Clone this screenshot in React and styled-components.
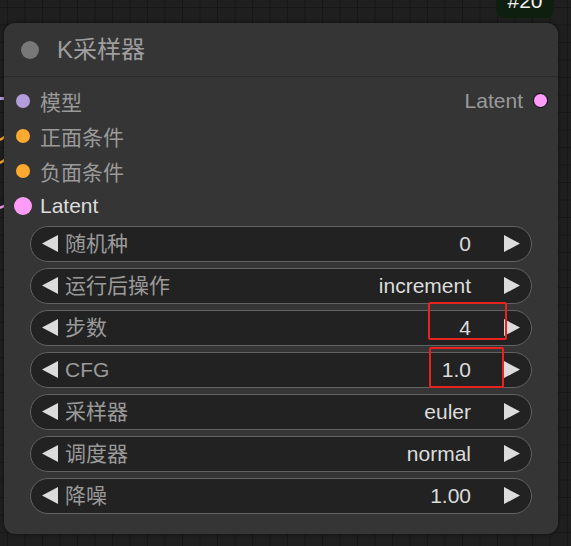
import React from "react";
import styled, { createGlobalStyle } from "styled-components";

const Global = createGlobalStyle`
  html, body { margin: 0; padding: 0; }
  body {
    width: 571px;
    height: 546px;
    overflow: hidden;
    background-color: #1f1f1f;
    background-image:
      linear-gradient(to right, #171717 1px, transparent 1px),
      linear-gradient(to bottom, #171717 1px, transparent 1px);
    background-size: 17.5px 17.5px;
    background-position: 7px 7px;
    font-family: "Liberation Sans", Arial, "Noto Sans CJK SC", sans-serif;
  }
`;

const Canvas = styled.div`
  position: relative;
  width: 571px;
  height: 546px;
`;

const Wires = styled.svg`
  position: absolute;
  left: 0;
  top: 0;
`;

const Badge = styled.div`
  position: absolute;
  left: 496px;
  top: -11px;
  width: 58px;
  height: 29px;
  background: #0f1f0f;
  border-radius: 0 0 8px 8px;
  color: #f2f2f2;
  font-size: 21px;
  line-height: 21px;
  text-align: center;
  padding-top: 1px;
  box-sizing: border-box;
`;

const Node = styled.div`
  position: absolute;
  left: 4px;
  top: 23px;
  width: 554px;
  height: 511px;
  background: #353535;
  border-radius: 11px;
  box-shadow: 0 0 4px rgba(0, 0, 0, 0.55);
  display: flex;
  flex-direction: column;
  box-sizing: border-box;
`;

const TitleBar = styled.div`
  height: 53px;
  border-bottom: 1px solid #2a2a2a;
  display: flex;
  align-items: center;
  padding-left: 17px;
  gap: 18px;
  box-sizing: content-box;
`;

const TitleDot = styled.span`
  width: 18px;
  height: 18px;
  border-radius: 50%;
  background: #787878;
`;

const TitleText = styled.span`
  font-size: 24px;
  color: #9e9e9e;
  line-height: 1;
`;

const Slots = styled.div`
  padding-top: 6px;
  display: flex;
  flex-direction: column;
`;

const SlotRow = styled.div`
  height: 35px;
  display: flex;
  align-items: center;
  justify-content: space-between;
`;

const Slot = styled.div`
  display: flex;
  align-items: center;
  font-size: 21px;
  color: ${(p) => (p.$bright ? "#dcdcdc" : "#9a9a9a")};
`;

const InDotBox = styled.span`
  width: 35px;
  display: flex;
  justify-content: center;
  margin-left: 1px;
`;

const Dot = styled.span`
  width: ${(p) => p.$size}px;
  height: ${(p) => p.$size}px;
  border-radius: 50%;
  background: ${(p) => p.$color};
  box-sizing: border-box;
  border: ${(p) => (p.$outlined ? "1.5px solid #000" : "none")};
`;

const OutDotBox = styled.span`
  width: 34px;
  display: flex;
  justify-content: center;
  margin-right: 1px;
`;

const Widgets = styled.div`
  margin-top: 2.5px;
  padding: 0 26px;
  display: flex;
  flex-direction: column;
  gap: 6px;
`;

const Widget = styled.div`
  height: 36px;
  box-sizing: border-box;
  border: 1.5px solid #626262;
  border-radius: 18px;
  background: #222222;
  display: flex;
  align-items: center;
  padding: 0 11px 0 11px;
  font-size: 21px;
`;

const Arrow = styled.span`
  width: 16px;
  height: 17px;
  background: #dcdcdc;
  clip-path: ${(p) =>
    p.$dir === "left"
      ? "polygon(0 50%, 100% 0, 100% 100%)"
      : "polygon(0 0, 100% 50%, 0 100%)"};
  flex: none;
`;

const Label = styled.span`
  margin-left: 7px;
  color: #9a9a9a;
  flex: 1;
  line-height: 1;
`;

const Value = styled.span`
  color: #dcdcdc;
  margin-right: 33px;
  line-height: 1;
`;

const Mark = styled.div`
  position: absolute;
  border: 2px solid #e8221c;
  border-radius: 2px;
  box-sizing: border-box;
`;

const inputs = [
  { label: "模型", color: "#b39ddb", size: 14 },
  { label: "正面条件", color: "#ffa931", size: 14 },
  { label: "负面条件", color: "#ffa931", size: 14 },
  { label: "Latent", color: "#ff9cf9", size: 18, bright: true },
];

const widgets = [
  ["随机种", "0"],
  ["运行后操作", "increment"],
  ["步数", "4"],
  ["CFG", "1.0"],
  ["采样器", "euler"],
  ["调度器", "normal"],
  ["降噪", "1.00"],
];

export default function App() {
  return (
    <Canvas>
      <Global />
      <Wires width="12" height="546" viewBox="0 0 12 546">
        <path d="M0 98.5 L6 98.5" stroke="#b39ddb" strokeWidth="3" />
        <path d="M0 140 L6 136" stroke="#ffa931" strokeWidth="2.5" fill="none" />
        <path d="M0 163 L6 159" stroke="#ffa931" strokeWidth="2.5" fill="none" />
        <path d="M0 208 L6 205" stroke="#ff9cf9" strokeWidth="2.5" fill="none" />
      </Wires>
      <Badge>#20</Badge>
      <Node>
        <TitleBar>
          <TitleDot />
          <TitleText>K采样器</TitleText>
        </TitleBar>
        <Slots>
          {inputs.map((inp, i) => (
            <SlotRow key={inp.label}>
              <Slot $bright={inp.bright}>
                <InDotBox>
                  <Dot $size={inp.size} $color={inp.color} />
                </InDotBox>
                {inp.label}
              </Slot>
              {i === 0 && (
                <Slot>
                  Latent
                  <OutDotBox>
                    <Dot $size={15} $color="#ff9cf9" $outlined />
                  </OutDotBox>
                </Slot>
              )}
            </SlotRow>
          ))}
        </Slots>
        <Widgets>
          {widgets.map(([l, v]) => (
            <Widget key={l}>
              <Arrow $dir="left" />
              <Label>{l}</Label>
              <Value>{v}</Value>
              <Arrow $dir="right" />
            </Widget>
          ))}
        </Widgets>
      </Node>
      <Mark style={{ left: 428, top: 302, width: 79, height: 38 }} />
      <Mark style={{ left: 429, top: 347, width: 75, height: 41 }} />
    </Canvas>
  );
}
